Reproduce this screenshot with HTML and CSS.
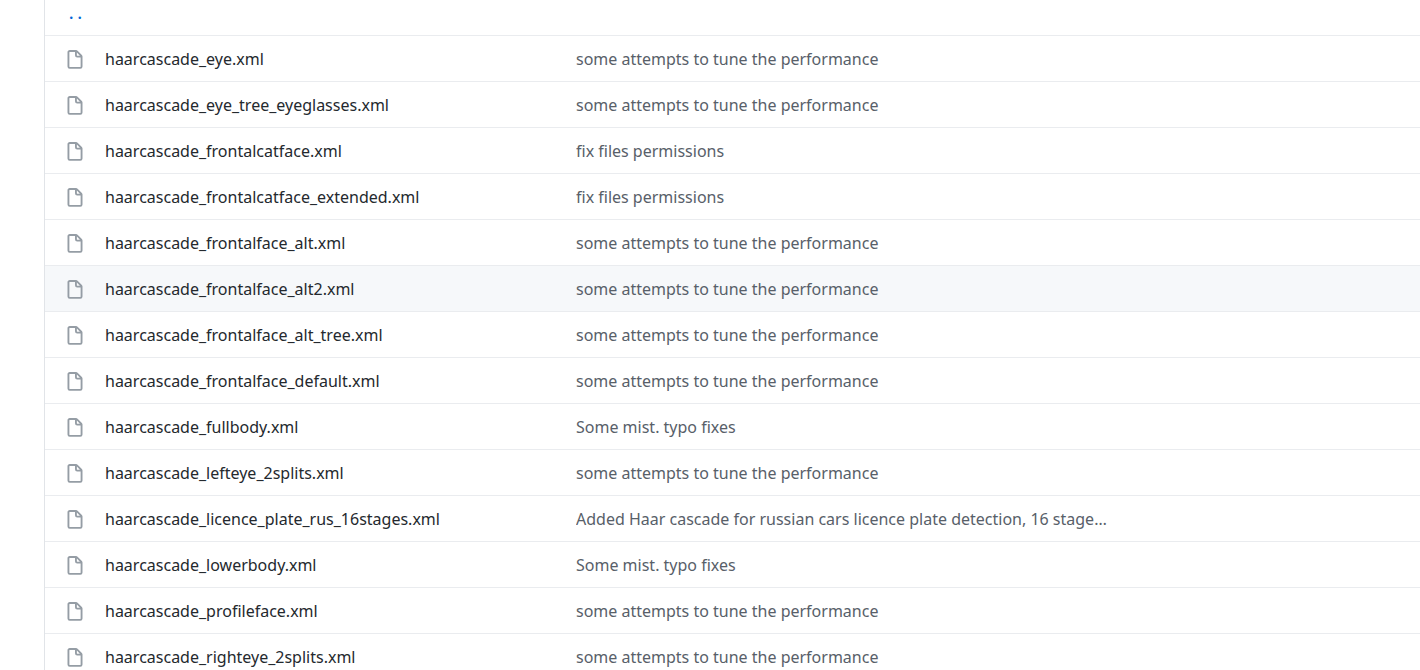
FILE: index.html
```html
<!DOCTYPE html>
<html lang="en">
<head>
  <meta charset="UTF-8">
  <meta name="viewport" content="width=device-width, initial-scale=1.0">
  <title>haarcascades</title>
  <link rel="stylesheet" href="styles.css">
</head>
<body>
  <!-- File icon, shared by all rows -->
  <svg class="sprite" aria-hidden="true">
    <symbol id="icon-file" viewBox="0 0 16 16">
      <path fill-rule="evenodd" d="M3.75 1.5a.25.25 0 00-.25.25v11.5c0 .138.112.25.25.25h8.5a.25.25 0 00.25-.25V6H9.75A1.75 1.75 0 018 4.25V1.5H3.75zm5.75.56v2.19c0 .138.112.25.25.25h2.19L9.5 2.06zM2 1.75C2 .784 2.784 0 3.75 0h5.086c.464 0 .909.184 1.237.513l3.414 3.414c.329.328.513.773.513 1.237v8.086A1.75 1.75 0 0112.25 15h-8.5A1.75 1.75 0 012 13.25V1.75z"></path>
    </symbol>
  </svg>

  <main class="file-box">
    <table class="files" aria-label="Files">
      <colgroup>
        <col class="files__col-icon">
        <col class="files__col-name">
        <col>
      </colgroup>
      <tbody>
        <tr class="files__row files__row--up">
          <td class="files__icon"><a href="#" class="files__up" aria-label="Parent directory">. .</a></td>
          <td></td>
          <td></td>
        </tr>
        <tr class="files__row">
          <td class="files__icon"><svg class="icon"><use href="#icon-file"></use></svg></td>
          <td class="files__name"><a href="#">haarcascade_eye.xml</a></td>
          <td class="files__message"><a href="#">some attempts to tune the performance</a></td>
        </tr>
        <tr class="files__row">
          <td class="files__icon"><svg class="icon"><use href="#icon-file"></use></svg></td>
          <td class="files__name"><a href="#">haarcascade_eye_tree_eyeglasses.xml</a></td>
          <td class="files__message"><a href="#">some attempts to tune the performance</a></td>
        </tr>
        <tr class="files__row">
          <td class="files__icon"><svg class="icon"><use href="#icon-file"></use></svg></td>
          <td class="files__name"><a href="#">haarcascade_frontalcatface.xml</a></td>
          <td class="files__message"><a href="#">fix files permissions</a></td>
        </tr>
        <tr class="files__row">
          <td class="files__icon"><svg class="icon"><use href="#icon-file"></use></svg></td>
          <td class="files__name"><a href="#">haarcascade_frontalcatface_extended.xml</a></td>
          <td class="files__message"><a href="#">fix files permissions</a></td>
        </tr>
        <tr class="files__row">
          <td class="files__icon"><svg class="icon"><use href="#icon-file"></use></svg></td>
          <td class="files__name"><a href="#">haarcascade_frontalface_alt.xml</a></td>
          <td class="files__message"><a href="#">some attempts to tune the performance</a></td>
        </tr>
        <tr class="files__row files__row--active">
          <td class="files__icon"><svg class="icon"><use href="#icon-file"></use></svg></td>
          <td class="files__name"><a href="#">haarcascade_frontalface_alt2.xml</a></td>
          <td class="files__message"><a href="#">some attempts to tune the performance</a></td>
        </tr>
        <tr class="files__row">
          <td class="files__icon"><svg class="icon"><use href="#icon-file"></use></svg></td>
          <td class="files__name"><a href="#">haarcascade_frontalface_alt_tree.xml</a></td>
          <td class="files__message"><a href="#">some attempts to tune the performance</a></td>
        </tr>
        <tr class="files__row">
          <td class="files__icon"><svg class="icon"><use href="#icon-file"></use></svg></td>
          <td class="files__name"><a href="#">haarcascade_frontalface_default.xml</a></td>
          <td class="files__message"><a href="#">some attempts to tune the performance</a></td>
        </tr>
        <tr class="files__row">
          <td class="files__icon"><svg class="icon"><use href="#icon-file"></use></svg></td>
          <td class="files__name"><a href="#">haarcascade_fullbody.xml</a></td>
          <td class="files__message"><a href="#">Some mist. typo fixes</a></td>
        </tr>
        <tr class="files__row">
          <td class="files__icon"><svg class="icon"><use href="#icon-file"></use></svg></td>
          <td class="files__name"><a href="#">haarcascade_lefteye_2splits.xml</a></td>
          <td class="files__message"><a href="#">some attempts to tune the performance</a></td>
        </tr>
        <tr class="files__row">
          <td class="files__icon"><svg class="icon"><use href="#icon-file"></use></svg></td>
          <td class="files__name"><a href="#">haarcascade_licence_plate_rus_16stages.xml</a></td>
          <td class="files__message"><a href="#">Added Haar cascade for russian cars licence plate detection, 16 stage…</a></td>
        </tr>
        <tr class="files__row">
          <td class="files__icon"><svg class="icon"><use href="#icon-file"></use></svg></td>
          <td class="files__name"><a href="#">haarcascade_lowerbody.xml</a></td>
          <td class="files__message"><a href="#">Some mist. typo fixes</a></td>
        </tr>
        <tr class="files__row">
          <td class="files__icon"><svg class="icon"><use href="#icon-file"></use></svg></td>
          <td class="files__name"><a href="#">haarcascade_profileface.xml</a></td>
          <td class="files__message"><a href="#">some attempts to tune the performance</a></td>
        </tr>
        <tr class="files__row">
          <td class="files__icon"><svg class="icon"><use href="#icon-file"></use></svg></td>
          <td class="files__name"><a href="#">haarcascade_righteye_2splits.xml</a></td>
          <td class="files__message"><a href="#">some attempts to tune the performance</a></td>
        </tr>
      </tbody>
    </table>
  </main>
</body>
</html>
```
FILE: styles.css
```css
:root {
  --text-primary: #24292e;
  --text-secondary: #586069;
  --link-blue: #0366d6;
  --icon-gray: #959da5;
  --border-box: #e1e4e8;
  --border-row: #eaecef;
  --row-hover: #f6f8fa;
  --white: #fff;
}

body {
  margin: 0;
  background: var(--white);
  color: var(--text-primary);
  font-family: "Segoe UI", "Noto Sans", sans-serif;
  font-size: 16px;
  line-height: 25px;
}

a {
  color: inherit;
  text-decoration: none;
}

a:hover {
  color: var(--link-blue);
  text-decoration: underline;
}

.sprite {
  display: none;
}

.file-box {
  box-sizing: border-box;
  height: 100vh;
  margin-left: 44px;
  border-left: 1px solid var(--border-box);
  overflow: hidden;
}

.files {
  width: 100%;
  border-spacing: 0;
  table-layout: fixed;
}

.files__col-icon {
  width: 60px;
}

.files__col-name {
  width: 471px;
}

.files td {
  padding: 11px 0 9px;
  border-top: 1px solid var(--border-row);
  white-space: nowrap;
  overflow: hidden;
  text-overflow: ellipsis;
}

.files .files__icon {
  padding-left: 20px;
}

.files__row--active,
.files__row:hover {
  background: var(--row-hover);
}

/* Link to the parent directory */
.files .files__row--up td {
  padding-top: 1px;
  border-top: 0;
}

.files__up {
  padding-left: 4px;
  color: var(--link-blue);
  font-weight: 600;
}

.files__message {
  color: var(--text-secondary);
}

.icon {
  display: block;
  width: 20px;
  height: 20px;
  fill: var(--icon-gray);
}
```
